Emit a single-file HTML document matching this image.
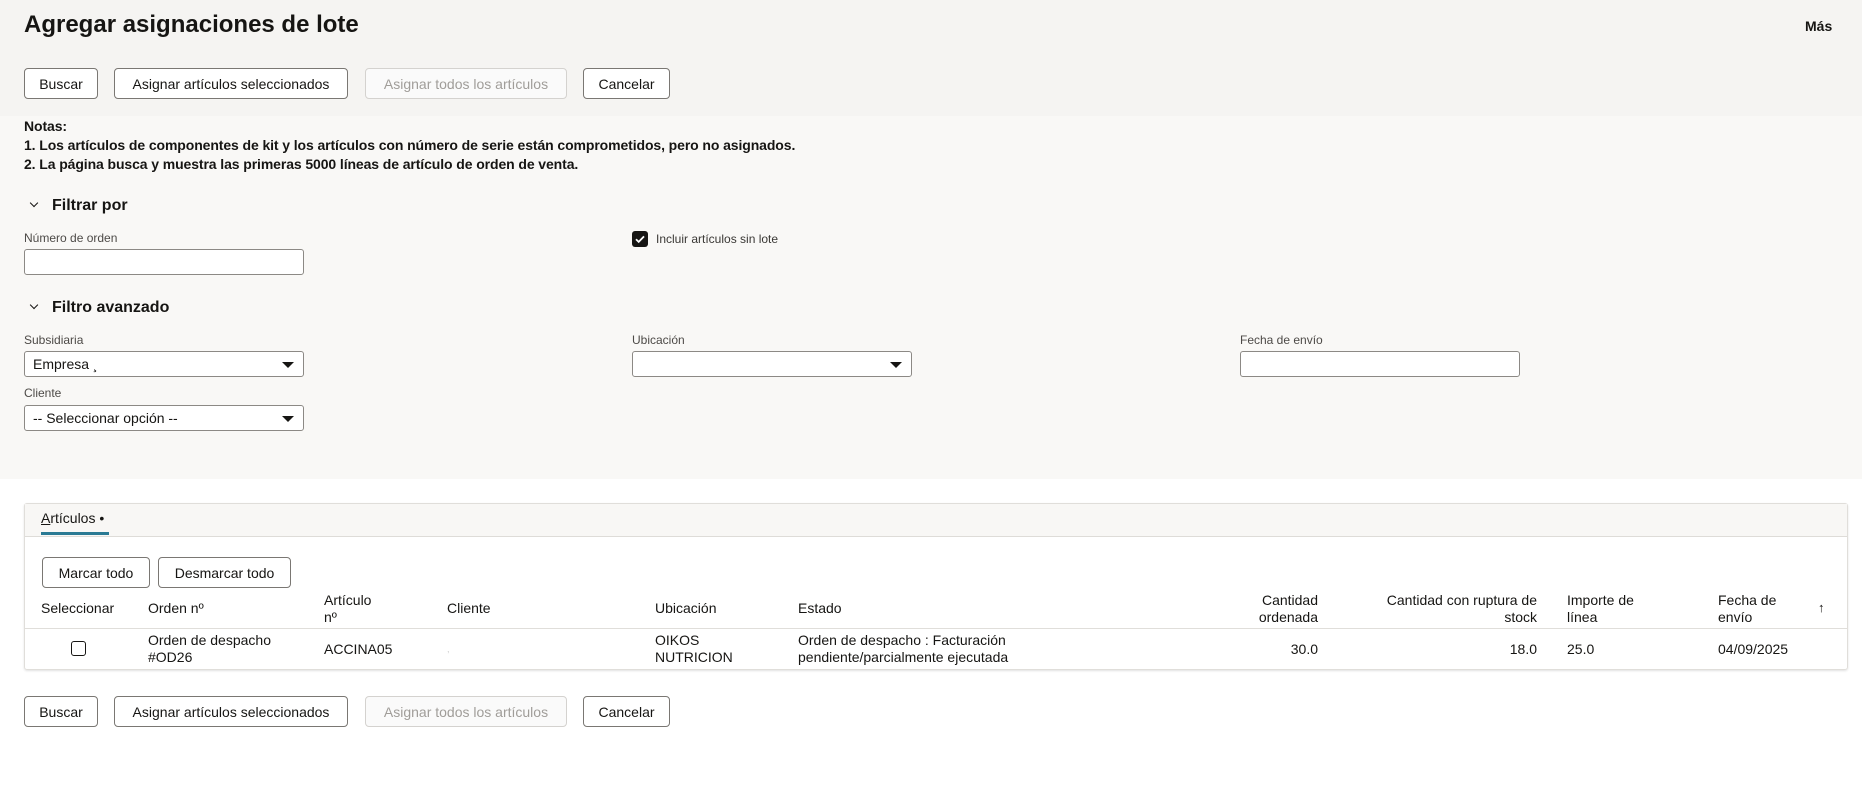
<!DOCTYPE html>
<html><head><meta charset="utf-8"><style>
*{box-sizing:border-box;margin:0;padding:0}
body{width:1862px;height:787px;background:#fff;font-family:"Liberation Sans",sans-serif;color:#161513;position:relative;overflow:hidden;font-size:14px}
.abs{position:absolute;white-space:nowrap}
#hdr{position:absolute;left:0;top:0;width:1862px;height:116px;background:#f5f4f2}
#mid{position:absolute;left:0;top:116px;width:1862px;height:363px;background:#f9f8f6}
.btn{position:absolute;height:31px;border:1px solid #7a7773;border-radius:4px;background:#fff;font-size:14px;display:flex;align-items:center;justify-content:center;color:#161513}
.dis{border-color:#d4d2cf;color:#a09d99;background:#fafafa}
.lbl{position:absolute;font-size:12px;color:#4d4a47;white-space:nowrap}
.inp{position:absolute;height:26px;border:1px solid #8c8985;border-radius:3px;background:#fff;font-size:14px;padding:4px 8px}
.arrow{position:absolute;right:9px;top:10px;width:0;height:0;border-left:6px solid transparent;border-right:6px solid transparent;border-top:6px solid #161513}
.sec{position:absolute;font-size:16px;font-weight:bold;white-space:nowrap}
.chev{display:inline-block;width:6px;height:6px;border-right:1.5px solid #161513;border-bottom:1.5px solid #161513;transform:rotate(45deg);margin:0 15px 4px 7px}
.th{position:absolute;font-size:14px;line-height:17px}
.td{position:absolute;font-size:14px;line-height:17px}
</style></head><body>
<div id="hdr"></div><div id="mid"></div>
<div class="abs" style="left:24px;top:11px;font-size:24px;font-weight:bold">Agregar asignaciones de lote</div>
<div class="abs" style="left:1805px;top:18px;font-size:14px;font-weight:bold">Más</div>

<div class="btn" style="left:24px;top:68px;width:74px">Buscar</div>
<div class="btn" style="left:114px;top:68px;width:234px">Asignar artículos seleccionados</div>
<div class="btn dis" style="left:365px;top:68px;width:202px">Asignar todos los artículos</div>
<div class="btn" style="left:583px;top:68px;width:87px">Cancelar</div>

<div class="abs" style="left:24px;top:117px;font-weight:bold;line-height:19px;letter-spacing:-0.1px">Notas:<br>1. Los artículos de componentes de kit y los artículos con número de serie están comprometidos, pero no asignados.<br>2. La página busca y muestra las primeras 5000 líneas de artículo de orden de venta.</div>

<div class="sec" style="left:24px;top:197px"><span class="chev"></span>Filtrar por</div>
<div class="lbl" style="left:24px;top:231px">Número de orden</div>
<div class="inp" style="left:24px;top:249px;width:280px"></div>
<div class="abs" style="left:632px;top:231px;width:16px;height:16px;background:#161513;border-radius:3px"><svg width="16" height="16" viewBox="0 0 16 16"><path d="M4 8.2l2.7 2.7L12 5.4" stroke="#fff" stroke-width="1.8" fill="none"/></svg></div>
<div class="lbl" style="left:656px;top:232px;color:#3a3835">Incluir artículos sin lote</div>

<div class="sec" style="left:24px;top:299px"><span class="chev"></span>Filtro avanzado</div>
<div class="lbl" style="left:24px;top:333px">Subsidiaria</div>
<div class="inp" style="left:24px;top:351px;width:280px">Empresa ¸<div class="arrow"></div></div>
<div class="lbl" style="left:632px;top:333px">Ubicación</div>
<div class="inp" style="left:632px;top:351px;width:280px"><div class="arrow"></div></div>
<div class="lbl" style="left:1240px;top:333px">Fecha de envío</div>
<div class="inp" style="left:1240px;top:351px;width:280px"></div>
<div class="lbl" style="left:24px;top:386px">Cliente</div>
<div class="inp" style="left:24px;top:405px;width:280px">-- Seleccionar opción --<div class="arrow"></div></div>

<div style="position:absolute;left:24px;top:503px;width:1824px;height:167px;border:1px solid #e0deda;border-radius:3px;box-shadow:0 1px 2px rgba(0,0,0,.12)"></div>
<div style="position:absolute;left:25px;top:504px;width:1822px;height:33px;background:#f8f7f5;border-bottom:1px solid #dedcd8"></div>
<div class="abs" style="left:41px;top:510px"><u>A</u>rtículos •</div>
<div style="position:absolute;left:41px;top:532px;width:68px;height:3px;background:#2a7a94"></div>

<div class="btn" style="left:42px;top:557px;width:108px">Marcar todo</div>
<div class="btn" style="left:158px;top:557px;width:133px">Desmarcar todo</div>

<div class="th" style="left:41px;top:600px">Seleccionar</div>
<div class="th" style="left:148px;top:600px">Orden nº</div>
<div class="th" style="left:324px;top:592px">Artículo<br>nº</div>
<div class="th" style="left:447px;top:600px">Cliente</div>
<div class="th" style="left:655px;top:600px">Ubicación</div>
<div class="th" style="left:798px;top:600px">Estado</div>
<div class="th" style="right:544px;top:592px;text-align:right">Cantidad<br>ordenada</div>
<div class="th" style="right:325px;top:592px;text-align:right">Cantidad con ruptura de<br>stock</div>
<div class="th" style="left:1567px;top:592px">Importe de<br>línea</div>
<div class="th" style="left:1718px;top:592px">Fecha de<br>envío</div>
<div class="th" style="left:1818px;top:599px;font-size:13px">↑</div>
<div style="position:absolute;left:25px;top:628px;width:1822px;height:1px;background:#e0deda"></div>

<div style="position:absolute;left:71px;top:641px;width:15px;height:15px;border:1.5px solid #161513;border-radius:3px"></div>
<div class="td" style="left:148px;top:632px">Orden de despacho<br>#OD26</div>
<div class="td" style="left:324px;top:641px">ACCINA05</div>
<div class="td" style="left:447px;top:641px;color:#ccc;font-size:9px">,</div>
<div class="td" style="left:655px;top:632px">OIKOS<br>NUTRICION</div>
<div class="td" style="left:798px;top:632px">Orden de despacho : Facturación<br>pendiente/parcialmente ejecutada</div>
<div class="td" style="right:544px;top:641px">30.0</div>
<div class="td" style="right:325px;top:641px">18.0</div>
<div class="td" style="left:1567px;top:641px">25.0</div>
<div class="td" style="left:1718px;top:641px">04/09/2025</div>

<div class="btn" style="left:24px;top:696px;width:74px">Buscar</div>
<div class="btn" style="left:114px;top:696px;width:234px">Asignar artículos seleccionados</div>
<div class="btn dis" style="left:365px;top:696px;width:202px">Asignar todos los artículos</div>
<div class="btn" style="left:583px;top:696px;width:87px">Cancelar</div>
</body></html>
